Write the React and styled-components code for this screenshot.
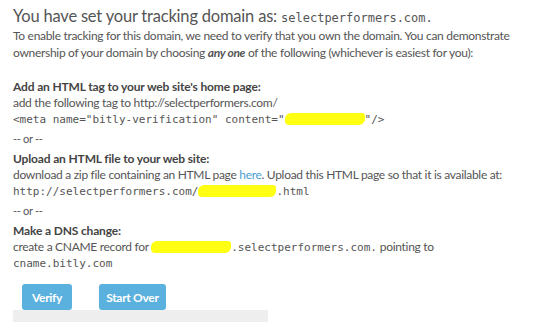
import styled, { createGlobalStyle } from 'styled-components';

const GlobalStyle = createGlobalStyle`
  body {
    margin: 0;
    background: #fff;
  }
`;

const Page = styled.div`
  padding: 6px 0 0 13px;
  font-family: Lato, 'Open Sans', sans-serif;
  font-size: 12px;
  letter-spacing: -0.3px;
  line-height: 16px;
  color: #555;
`;

const Heading = styled.h2`
  margin: 0 0 1px;
  font-size: 16.5px;
  line-height: 20px;
  font-weight: 400;
  letter-spacing: -0.2px;
  color: #555;
`;

const Mono = styled.span`
  font-family: 'DejaVu Sans Mono', 'Liberation Mono', monospace;
  font-size: ${p => p.$size || 11}px;
  line-height: 1;
  letter-spacing: 0;
`;

const Intro = styled.p`
  margin: 0 0 18px;
  line-height: 17px;
`;

const Option = styled.div`
  margin: 0;
`;

const Title = styled.div`
  font-weight: 700;
  letter-spacing: -0.15px;
  color: #444;
`;

const Line = styled.div``;

const Or = styled.div`
  margin: 4px 0 4px;
  font-size: 11px;
`;

const Link = styled.a`
  color: #4a9fd6;
  text-decoration: none;
`;

const Redact = styled.span`
  display: inline-block;
  width: ${p => p.$w}px;
  height: 12px;
  vertical-align: -2px;
  background: #ffff14;
  border-radius: 6px 3px 6px 4px;
`;

const Buttons = styled.div`
  display: flex;
  gap: 27px;
  margin: 13px 0 0 9px;
`;

const Button = styled.button`
  height: 26px;
  padding: 0 ${p => p.$pad || 10}px;
  border: 0;
  border-radius: 3px;
  background: #5bb1dd;
  color: #fff;
  font-family: Lato, sans-serif;
  font-size: 12px;
  letter-spacing: -0.3px;
  font-weight: 700;
`;

const Footer = styled.div`
  width: 255px;
  height: 20px;
  background: #eee;
`;

export default function App() {
  return (
    <>
      <GlobalStyle />
      <Page>
        <Heading>
          You have set your tracking domain as: <Mono $size={12}>selectperformers.com.</Mono>
        </Heading>
        <Intro>
          To enable tracking for this domain, we need to verify that you own the domain. You can demonstrate
          ownership of your domain by choosing <b><i>any one</i></b> of the following (whichever is easiest for you):
        </Intro>

        <Option>
          <Title>Add an HTML tag to your web site's home page:</Title>
          <Line>add the following tag to http://selectperformers.com/</Line>
          <Line>
            <Mono>&lt;meta name="bitly-verification" content="<Redact $w={80} />"/&gt;</Mono>
          </Line>
        </Option>
        <Or>-- or --</Or>
        <Option>
          <Title>Upload an HTML file to your web site:</Title>
          <Line>
            download a zip file containing an HTML page <Link href="#">here</Link>. Upload this HTML page so that it is available at:
          </Line>
          <Line>
            <Mono>http://selectperformers.com/<Redact $w={78} />.html</Mono>
          </Line>
        </Option>
        <Or>-- or --</Or>
        <Option>
          <Title>Make a DNS change:</Title>
          <Line>
            create a CNAME record for <Redact $w={80} /><Mono>.selectperformers.com.</Mono> pointing to
          </Line>
          <Line>
            <Mono>cname.bitly.com</Mono>
          </Line>
        </Option>

        <Buttons>
          <Button $pad={10}>Verify</Button>
          <Button $pad={7}>Start Over</Button>
        </Buttons>
        <Footer />
      </Page>
    </>
  );
}
